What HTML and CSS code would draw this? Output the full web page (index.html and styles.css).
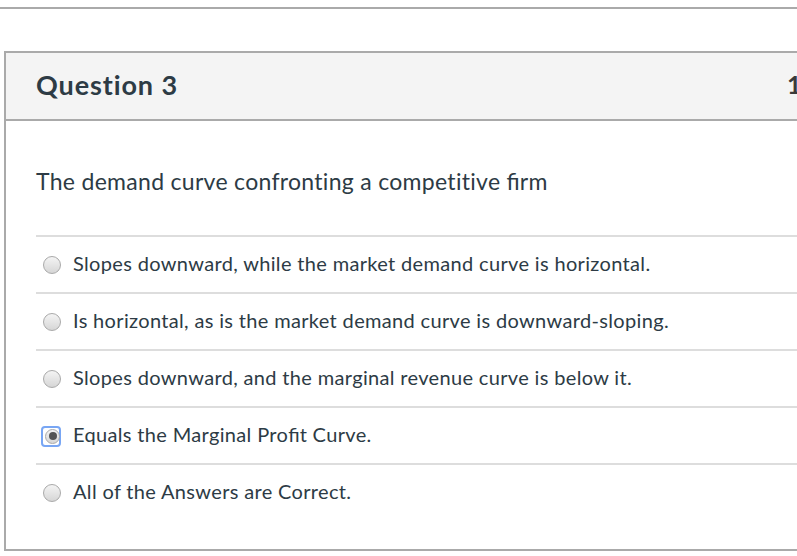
FILE: index.html
```html
<!DOCTYPE html>
<html>
<head>
<meta charset="utf-8">
<link rel="stylesheet" href="styles.css">
</head>
<body>
<div class="page">
  <div class="top-rule"></div>
  <div class="question">
    <div class="q-header">
      <span class="q-title">Question 3</span>
      <span class="q-points">1 pts</span>
    </div>
    <div class="q-body">
      <p class="q-text">The demand curve confronting a competitive <span class="lig">fi</span>rm</p>
      <div class="answers">
        <label class="answer"><input type="radio" name="a" class="radio"><span class="a-text">Slopes downward, while the market demand curve is horizontal.</span></label>
        <label class="answer"><input type="radio" name="a" class="radio"><span class="a-text">Is horizontal, as is the market demand curve is downward-sloping.</span></label>
        <label class="answer"><input type="radio" name="a" class="radio"><span class="a-text">Slopes downward, and the marginal revenue curve is below it.</span></label>
        <label class="answer"><span class="focus-ring"><input type="radio" name="a" class="radio selected" checked></span><span class="a-text">Equals the Marginal Pro<span class="lig">fi</span>t Curve.</span></label>
        <label class="answer"><input type="radio" name="a" class="radio"><span class="a-text">All of the Answers are Correct.</span></label>
      </div>
    </div>
  </div>
</div>
</body>
</html>
```
FILE: styles.css
```css
html, body {
  margin: 0;
  padding: 0;
  background: #ffffff;
  overflow: hidden;
}
.page {
  width: 797px;
  height: 556px;
  overflow: hidden;
  font-family: Lato, "Liberation Sans", sans-serif;
  color: #2d3b45;
}
.top-rule {
  margin-top: 7px;
  height: 2px;
  background: #aaaaaa;
}
.question {
  margin-top: 42px;
  margin-left: 4px;
  width: 900px;
  border: 2px solid #aaaaaa;
  box-sizing: border-box;
}
.q-header {
  height: 66px;
  box-sizing: border-box;
  padding-bottom: 4px;
  background: #f4f4f4;
  border-bottom: 2px solid #aaaaaa;
  display: flex;
  align-items: center;
  padding-left: 30px;
}
.q-header {
  height: 68px;
}
.q-title {
  flex: 0 0 751px;
  font-size: 27px;
  font-weight: 700;
  letter-spacing: 0.9px;
}
.q-points {
  font-size: 25px;
  font-weight: 700;
  color: #3a3a3a;
  white-space: nowrap;
}
.q-body {
  padding: 0 0 29px 30px;
}
.q-text {
  margin: 0;
  padding-top: 47px;
  height: 67px;
  font-size: 23px;
  line-height: 26px;
  letter-spacing: 0.3px;
}
.lig {
  letter-spacing: 0;
}
.answers {
  display: flex;
  flex-direction: column;
}
.answer {
  display: flex;
  align-items: center;
  height: 55px;
  box-sizing: border-box;
  height: 57px;
  padding-bottom: 3px;
  border-top: 2px solid #dddddd;
  font-size: 20px;
  letter-spacing: 0.34px;
}
.radio {
  appearance: none;
  -webkit-appearance: none;
  margin: 3px 12px 0 7px;
  width: 18px;
  height: 18px;
  border-radius: 50%;
  border: 1px solid #a9a9a9;
  background: linear-gradient(#f4f4f4, #d6d6d6);
  box-sizing: border-box;
  position: relative;
  flex: 0 0 auto;
  outline: none;
}
.focus-ring {
  position: relative;
  display: flex;
  flex: 0 0 auto;
  margin-top: 3px;
}
.focus-ring::before {
  content: "";
  position: absolute;
  left: 5px;
  top: -2px;
  width: 20px;
  height: 21px;
  box-sizing: border-box;
  border: 2px solid #78a6f4;
  border-radius: 4px;
  background: #ffffff;
}
.radio.selected {
  width: 15px;
  height: 15px;
  margin: 1px 13px 0 9px;
  z-index: 1;
}
.radio.selected::after {
  content: "";
  position: absolute;
  left: 2.5px;
  top: 2.5px;
  width: 8px;
  height: 8px;
  border-radius: 50%;
  background: #555555;
}
.a-text {
  white-space: nowrap;
}
```
